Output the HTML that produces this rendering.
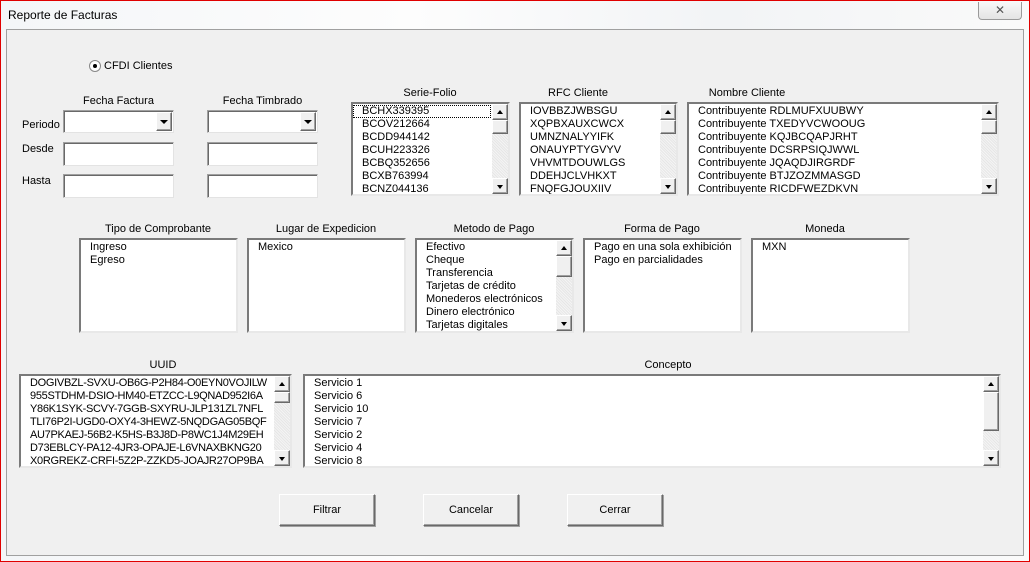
<!DOCTYPE html>
<html><head><meta charset="utf-8"><style>
*{box-sizing:border-box;margin:0;padding:0}
body{width:1030px;height:562px;overflow:hidden;background:#fff;font-family:"Liberation Sans",sans-serif;font-size:11px;color:#000;position:relative}
.a{position:absolute}
#frame{left:0;top:0;width:1030px;height:562px;border:1px solid #e00000;background:linear-gradient(90deg,#f4f6f8,#fdfdfd 40%,#f2f4f6 70%,#fafafa)}
#title{left:8px;top:8px;font-size:12px}
#close{left:978px;top:2px;width:44px;height:18px;border:1px solid #9a9a9a;border-top:none;border-radius:0 0 4px 4px;background:linear-gradient(#f8f8f8,#e4e4e4);text-align:center;font-size:12px;line-height:16px;color:#555}
#panel{left:6px;top:29px;width:1018px;height:527px;background:#f0f0f0;border:1px solid #a0a0a0}
.lbl{position:absolute;text-align:center;white-space:nowrap}
.box{position:absolute;background:#fff;border:1px solid;border-color:#a0a0a0 #e3e3e3 #e3e3e3 #a0a0a0;box-shadow:inset 1px 1px 0 #696969}
.list{position:absolute;background:#fff;border:2px solid;border-color:#7a7a7a #e8e8e8 #e8e8e8 #7a7a7a;overflow:hidden;line-height:13px;padding-top:1px}
.list > div.i{padding-left:9px;white-space:nowrap;height:13px}
.sb{position:absolute;right:0;top:0;bottom:0;width:16px;background:#ececec repeating-linear-gradient(45deg,#f4f4f4 0 1px,#e6e6e6 1px 2px)}
.btn{position:absolute;left:0;width:16px;height:16px;background:#f0f0f0;border:1px solid;border-color:#fff #696969 #696969 #fff;box-shadow:inset -1px -1px 0 #a0a0a0}
.up:after,.dn:after{content:"";position:absolute;left:4px;border-left:3px solid transparent;border-right:3px solid transparent}
.up:after{top:5px;border-bottom:4px solid #000}
.dn:after{top:6px;border-top:4px solid #000}
.combo{position:absolute;height:23px;background:#fff;border:1px solid;border-color:#a0a0a0 #e3e3e3 #e3e3e3 #a0a0a0;box-shadow:inset 1px 1px 0 #696969}
.combo .btn{left:auto;right:1px;top:1px;width:16px;height:19px}
.combo .btn:after{content:"";position:absolute;left:3px;top:7px;border-left:4px solid transparent;border-right:4px solid transparent;border-top:4px solid #000}
.pb{position:absolute;width:96px;height:32px;background:#f0f0f0;border:1px solid;border-color:#fff #696969 #696969 #fff;box-shadow:inset -1px -1px 0 #a0a0a0,1px 1px 0 #a0a0a0;text-align:center;line-height:30px;font-size:11px}
.u .i{letter-spacing:-0.3px}
</style></head><body>
<div class="a" id="frame"></div>
<div class="a" id="title">Reporte de Facturas</div>
<div class="a" id="close">✕</div>
<div class="a" id="panel"></div>

<div class="a" style="left:89px;top:60px;width:12px;height:12px;border-radius:50%;border:1px solid #888;background:#fff"><div class="a" style="left:3px;top:3px;width:4px;height:4px;border-radius:50%;background:#000"></div></div>
<div class="a" style="left:104px;top:60px">CFDI Clientes</div>

<div class="lbl" style="left:63px;width:111px;top:95px">Fecha Factura</div>
<div class="lbl" style="left:207px;width:111px;top:95px">Fecha Timbrado</div>
<div class="a" style="left:22px;top:119px">Periodo</div>
<div class="a" style="left:22px;top:143px">Desde</div>
<div class="a" style="left:22px;top:175px">Hasta</div>
<div class="combo" style="left:63px;top:110px;width:111px"><div class="btn"></div></div>
<div class="combo" style="left:207px;top:110px;width:111px"><div class="btn"></div></div>
<div class="box" style="left:63px;top:142px;width:111px;height:24px"></div>
<div class="box" style="left:207px;top:142px;width:111px;height:24px"></div>
<div class="box" style="left:63px;top:174px;width:111px;height:24px"></div>
<div class="box" style="left:207px;top:174px;width:111px;height:24px"></div>

<div class="lbl" style="left:351px;width:158px;top:87px">Serie-Folio</div>
<div class="lbl" style="left:519px;width:118px;top:87px">RFC Cliente</div>
<div class="lbl" style="left:687px;width:120px;top:87px">Nombre Cliente</div>

<div class="list" style="left:351px;top:102px;width:159px;height:94px">
<div class="i" style="outline:1px dotted #000;outline-offset:-1px;width:138px">BCHX339395</div><div class="i">BCOV212664</div><div class="i">BCDD944142</div><div class="i">BCUH223326</div><div class="i">BCBQ352656</div><div class="i">BCXB763994</div><div class="i">BCNZ044136</div>
<div class="sb"><div class="btn up" style="top:0"></div><div class="btn" style="top:16px;height:14px"></div><div class="btn dn" style="bottom:0"></div></div></div>

<div class="list" style="left:519px;top:102px;width:159px;height:94px">
<div class="i">IOVBBZJWBSGU</div><div class="i">XQPBXAUXCWCX</div><div class="i">UMNZNALYYIFK</div><div class="i">ONAUYPTYGVYV</div><div class="i">VHVMTDOUWLGS</div><div class="i">DDEHJCLVHKXT</div><div class="i">FNQFGJOUXIIV</div>
<div class="sb"><div class="btn up" style="top:0"></div><div class="btn" style="top:16px;height:14px"></div><div class="btn dn" style="bottom:0"></div></div></div>

<div class="list" style="left:687px;top:102px;width:312px;height:94px">
<div class="i">Contribuyente RDLMUFXUUBWY</div><div class="i">Contribuyente TXEDYVCWOOUG</div><div class="i">Contribuyente KQJBCQAPJRHT</div><div class="i">Contribuyente DCSRPSIQJWWL</div><div class="i">Contribuyente JQAQDJIRGRDF</div><div class="i">Contribuyente BTJZOZMMASGD</div><div class="i">Contribuyente RICDFWEZDKVN</div>
<div class="sb"><div class="btn up" style="top:0"></div><div class="btn" style="top:16px;height:14px"></div><div class="btn dn" style="bottom:0"></div></div></div>

<div class="lbl" style="left:79px;width:158px;top:223px">Tipo de Comprobante</div>
<div class="lbl" style="left:247px;width:158px;top:223px">Lugar de Expedicion</div>
<div class="lbl" style="left:415px;width:158px;top:223px">Metodo de Pago</div>
<div class="lbl" style="left:583px;width:158px;top:223px">Forma de Pago</div>
<div class="lbl" style="left:751px;width:148px;top:223px">Moneda</div>

<div class="list" style="left:79px;top:238px;width:159px;height:95px"><div class="i">Ingreso</div><div class="i">Egreso</div></div>
<div class="list" style="left:247px;top:238px;width:159px;height:95px"><div class="i">Mexico</div></div>
<div class="list" style="left:415px;top:238px;width:159px;height:95px">
<div class="i">Efectivo</div><div class="i">Cheque</div><div class="i">Transferencia</div><div class="i">Tarjetas de crédito</div><div class="i">Monederos electrónicos</div><div class="i">Dinero electrónico</div><div class="i">Tarjetas digitales</div>
<div class="sb"><div class="btn up" style="top:0"></div><div class="btn" style="top:16px;height:21px"></div><div class="btn dn" style="bottom:0"></div></div></div>
<div class="list" style="left:583px;top:238px;width:159px;height:95px"><div class="i">Pago en una sola exhibición</div><div class="i">Pago en parcialidades</div></div>
<div class="list" style="left:751px;top:238px;width:159px;height:95px"><div class="i">MXN</div></div>

<div class="lbl" style="left:19px;width:288px;top:359px">UUID</div>
<div class="lbl" style="left:303px;width:730px;top:359px">Concepto</div>

<div class="list u" style="left:19px;top:374px;width:273px;height:94px">
<div class="i">DOGIVBZL-SVXU-OB6G-P2H84-O0EYN0VOJILW</div><div class="i">955STDHM-DSIO-HM40-ETZCC-L9QNAD952I6A</div><div class="i">Y86K1SYK-SCVY-7GGB-SXYRU-JLP131ZL7NFL</div><div class="i">TLI76P2I-UGD0-OXY4-3HEWZ-5NQDGAG05BQF</div><div class="i">AU7PKAEJ-56B2-K5HS-B3J8D-P8WC1J4M29EH</div><div class="i">D73EBLCY-PA12-4JR3-OPAJE-L6VNAXBKNG20</div><div class="i">X0RGREKZ-CRFI-5Z2P-ZZKD5-JOAJR27OP9BA</div>
<div class="sb"><div class="btn up" style="top:0"></div><div class="btn" style="top:16px;height:11px"></div><div class="btn dn" style="bottom:0"></div></div></div>

<div class="list" style="left:303px;top:374px;width:698px;height:94px">
<div class="i">Servicio 1</div><div class="i">Servicio 6</div><div class="i">Servicio 10</div><div class="i">Servicio 7</div><div class="i">Servicio 2</div><div class="i">Servicio 4</div><div class="i">Servicio 8</div>
<div class="sb"><div class="btn up" style="top:0"></div><div class="btn" style="top:16px;height:39px"></div><div class="btn dn" style="bottom:0"></div></div></div>

<div class="pb" style="left:279px;top:494px">Filtrar</div>
<div class="pb" style="left:423px;top:494px">Cancelar</div>
<div class="pb" style="left:567px;top:494px">Cerrar</div>
</body></html>
